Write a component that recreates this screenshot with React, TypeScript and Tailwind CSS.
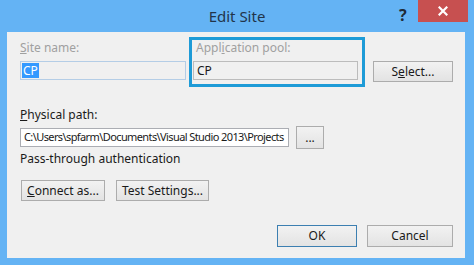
const font = { fontFamily: '"Noto Sans", "Open Sans", sans-serif' };

function Btn({
  children,
  className = "",
  blue = false,
}: {
  children: React.ReactNode;
  className?: string;
  blue?: boolean;
}) {
  return (
    <button
      className={
        "flex items-center justify-center text-[12px] text-[#1a1a1a] bg-gradient-to-b from-[#f2f2f2] to-[#e3e3e3] border " +
        (blue ? "border-[#3c7fb1]" : "border-[#acacac]") +
        " " +
        className
      }
    >
      {children}
    </button>
  );
}

export default function App() {
  return (
    <div className="w-[474px] h-[265px] bg-[#64b3f4] flex flex-col overflow-hidden" style={font}>
      {/* Title bar */}
      <div className="h-[32px] shrink-0 relative flex items-center justify-center">
        <span className="text-[15px] text-[#22354a] mt-[1px]">Edit Site</span>
        <span className="absolute left-[399px] top-[3px] text-[16px] font-bold text-[#1e2a36]">?</span>
        <div className="absolute left-[418px] top-0 w-[50px] h-[22px] bg-[#c75050] flex items-center justify-center">
          <svg width="10" height="10" viewBox="0 0 10 10">
            <path d="M1.5 1.5l7 7M8.5 1.5l-7 7" stroke="#fff" strokeWidth="2.2" strokeLinecap="square" />
          </svg>
        </div>
      </div>

      {/* Client area */}
      <div className="mx-[7px] w-[458px] h-[226px] bg-[#f0f0f0] flex flex-col pl-[13px] pr-[12px] text-[12px]">
        {/* Row 1 */}
        <div className="flex items-start pt-[5px]">
          <div className="flex flex-col pt-[3px]">
            <span className="leading-[16px] mb-[5px] text-[#a0a0a0]">
              <u>S</u>ite name:
            </span>
            <div className="w-[166px] h-[19px] border border-[#b4cde6] bg-[#f0f0f0] flex items-center pl-[1px]">
              <span className="bg-[#3399ff] text-white leading-[15px] px-[1px]">CP</span>
            </div>
          </div>
          <div className="ml-[3px] w-[176px] h-[50px] border-[3px] border-[#1e9bd7] flex flex-col">
            <span className="leading-[16px] mb-[5px] pl-[4px] text-[#a0a0a0]">
              Appl<u>i</u>cation pool:
            </span>
            <div className="ml-[1px] w-[165px] h-[19px] border border-[#bcbcbc] bg-[#f0f0f0] flex items-center pl-[3px] text-[#1a1a1a]">
              CP
            </div>
          </div>
          <Btn className="ml-[8px] mt-[24px] w-[80px] h-[21px]">
            S<u>e</u>lect...
          </Btn>
        </div>

        {/* Physical path */}
        <span className="mt-[20px] leading-[16px] mb-[3px] text-[#1a1a1a]">
          <u>P</u>hysical path:
        </span>
        <div className="flex items-center">
          <div className="w-[269px] h-[19px] border border-[#abadb3] bg-white flex items-center pl-[3px] overflow-hidden whitespace-nowrap text-[#1a1a1a] text-[11px] tracking-[-0.6px]">
            C:\Users\spfarm\Documents\Visual Studio 2013\Projects
          </div>
          <Btn className="ml-[7px] w-[28px] h-[23px] text-[9px]">...</Btn>
        </div>
        <span className="mt-[2px] leading-[16px] text-[#1a1a1a]">Pass-through authentication</span>

        <div className="flex mt-[13px] ml-[1px]">
          <Btn className="w-[84px] h-[21px]">
            <u>C</u>onnect as...
          </Btn>
          <Btn className="ml-[11px] w-[93px] h-[21px]">Test Settings...</Btn>
        </div>

        <div className="flex justify-end mt-[24px]">
          <Btn blue className="w-[80px] h-[22px]">
            OK
          </Btn>
          <Btn className="ml-[10px] w-[86px] h-[22px]">Cancel</Btn>
        </div>
      </div>
    </div>
  );
}
